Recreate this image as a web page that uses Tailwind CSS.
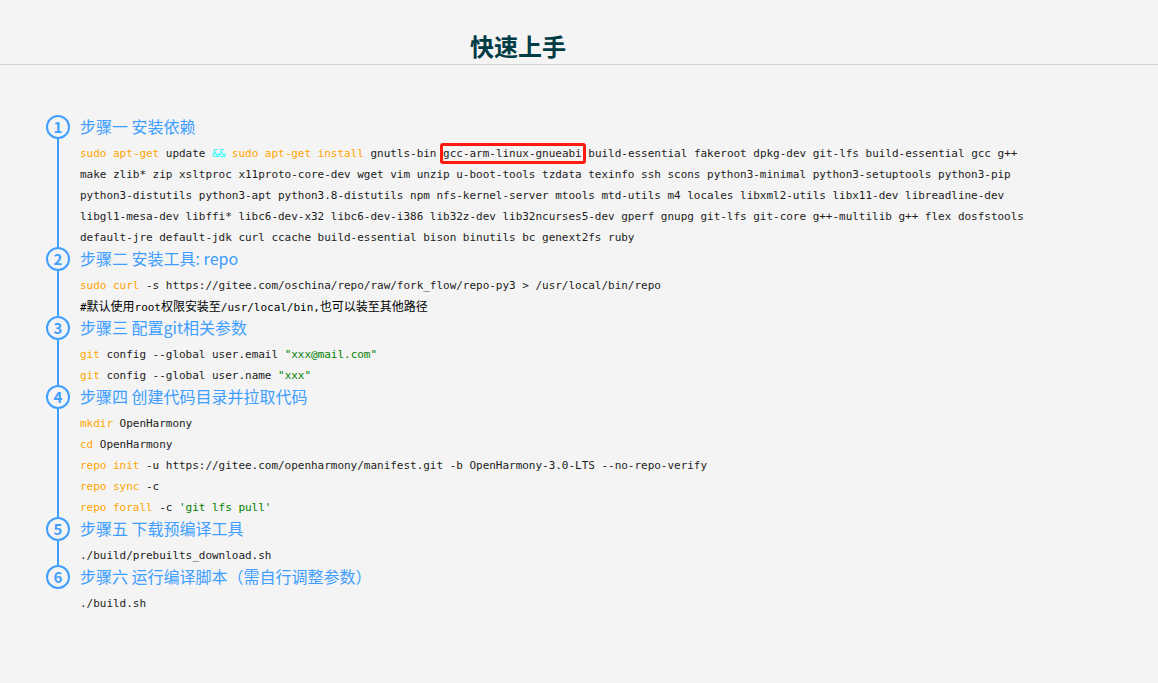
<!DOCTYPE html>
<html lang="zh">
  <head>
    <meta charset="UTF-8" />
    <title>快速上手</title>
    <script src="https://cdn.jsdelivr.net/npm/@tailwindcss/browser@4"></script>
  </head>
  <body class="bg-[#f4f4f4] h-[683px] overflow-hidden font-['Noto_Sans_CJK_SC',sans-serif]">
    <header class="h-[65px] border-b border-[#d2d2d2] pr-[122px] flex items-end justify-center pb-[2px]">
      <h1 class="text-[24px] leading-[32px] font-bold text-[#003c46] mt-[1px]">快速上手</h1>
    </header>

    <main class="pl-[46px] pt-[50px]">
      <!-- step 1 -->
      <section class="flex gap-[10px]">
        <div class="w-[24px] flex flex-col">
          <div class="size-[24px] shrink-0 rounded-full border-[2px] border-[#409eff] flex items-center justify-center text-[15px] font-bold text-[#409eff]">1</div>
          <div class="w-[2px] ml-[11px] flex-1 bg-[#409eff]"></div>
        </div>
        <div class="flex-1">
          <h2 class="h-[25px] mb-[3px] text-[16px] leading-[22px] text-[#409eff]">步骤一 安装依赖</h2>
          <div class="-mb-[1px] font-['DejaVu_Sans_Mono',monospace] text-[11px] tracking-[-0.022px] leading-[21px] text-[#1c1c1c]">
            <p><span class="text-[#ffa500]">sudo apt-get</span> update <span class="text-[#00ffff]">&amp;&amp;</span> <span class="text-[#ffa500]">sudo apt-get install</span> gnutls-bin <span class="relative">gcc-arm-linux-gnueabi<span class="absolute -left-[3px] -right-[4px] -top-[4px] -bottom-[4px] border-[3px] border-[#ff1a0e] rounded-[3px]"></span></span> build-essential fakeroot dpkg-dev git-lfs build-essential gcc g++</p>
            <p>make zlib* zip xsltproc x11proto-core-dev wget vim unzip u-boot-tools tzdata texinfo ssh scons python3-minimal python3-setuptools python3-pip</p>
            <p>python3-distutils python3-apt python3.8-distutils npm nfs-kernel-server mtools mtd-utils m4 locales libxml2-utils libx11-dev libreadline-dev</p>
            <p>libgl1-mesa-dev libffi* libc6-dev-x32 libc6-dev-i386 lib32z-dev lib32ncurses5-dev gperf gnupg git-lfs git-core g++-multilib g++ flex dosfstools</p>
            <p>default-jre default-jdk curl ccache build-essential bison binutils bc genext2fs ruby</p>
          </div>
        </div>
      </section>

      <!-- step 2 -->
      <section class="flex gap-[10px]">
        <div class="w-[24px] flex flex-col">
          <div class="size-[24px] shrink-0 rounded-full border-[2px] border-[#409eff] flex items-center justify-center text-[15px] font-bold text-[#409eff]">2</div>
          <div class="w-[2px] ml-[11px] flex-1 bg-[#409eff]"></div>
        </div>
        <div class="flex-1">
          <h2 class="h-[25px] mb-[3px] text-[16px] leading-[22px] text-[#409eff]">步骤二 安装工具: repo</h2>
          <div class="-mb-[1px] font-['DejaVu_Sans_Mono',monospace] text-[11px] tracking-[-0.022px] leading-[21px] text-[#1c1c1c]">
            <p><span class="text-[#ffa500]">sudo curl</span> -s https://gitee.com/oschina/repo/raw/fork_flow/repo-py3 &gt; /usr/local/bin/repo</p>
            <p class="h-[21px] pt-[1px] text-black">#<span class="text-[12px] leading-none font-['Noto_Sans_CJK_SC']">默认使用</span>root<span class="text-[12px] leading-none font-['Noto_Sans_CJK_SC']">权限安装至</span>/usr/local/bin,<span class="text-[12px] leading-none font-['Noto_Sans_CJK_SC']">也可以装至其他路径</span></p>
          </div>
        </div>
      </section>

      <!-- step 3 -->
      <section class="flex gap-[10px]">
        <div class="w-[24px] flex flex-col">
          <div class="size-[24px] shrink-0 rounded-full border-[2px] border-[#409eff] flex items-center justify-center text-[15px] font-bold text-[#409eff]">3</div>
          <div class="w-[2px] ml-[11px] flex-1 bg-[#409eff]"></div>
        </div>
        <div class="flex-1">
          <h2 class="h-[25px] mb-[3px] text-[16px] leading-[22px] text-[#409eff]">步骤三 配置git相关参数</h2>
          <div class="-mb-[1px] font-['DejaVu_Sans_Mono',monospace] text-[11px] tracking-[-0.022px] leading-[21px] text-[#1c1c1c]">
            <p><span class="text-[#ffa500]">git</span> config --global user.email <span class="text-[#008000]">"xxx@mail.com"</span></p>
            <p><span class="text-[#ffa500]">git</span> config --global user.name <span class="text-[#008000]">"xxx"</span></p>
          </div>
        </div>
      </section>

      <!-- step 4 -->
      <section class="flex gap-[10px]">
        <div class="w-[24px] flex flex-col">
          <div class="size-[24px] shrink-0 rounded-full border-[2px] border-[#409eff] flex items-center justify-center text-[15px] font-bold text-[#409eff]">4</div>
          <div class="w-[2px] ml-[11px] flex-1 bg-[#409eff]"></div>
        </div>
        <div class="flex-1">
          <h2 class="h-[25px] mb-[3px] text-[16px] leading-[22px] text-[#409eff]">步骤四 创建代码目录并拉取代码</h2>
          <div class="-mb-[1px] font-['DejaVu_Sans_Mono',monospace] text-[11px] tracking-[-0.022px] leading-[21px] text-[#1c1c1c]">
            <p><span class="text-[#ffa500]">mkdir</span> OpenHarmony</p>
            <p><span class="text-[#ffa500]">cd</span> OpenHarmony</p>
            <p><span class="text-[#ffa500]">repo init</span> -u https://gitee.com/openharmony/manifest.git -b OpenHarmony-3.0-LTS --no-repo-verify</p>
            <p><span class="text-[#ffa500]">repo sync</span> -c</p>
            <p><span class="text-[#ffa500]">repo forall</span> -c <span class="text-[#008000]">'git lfs pull'</span></p>
          </div>
        </div>
      </section>

      <!-- step 5 -->
      <section class="flex gap-[10px]">
        <div class="w-[24px] flex flex-col">
          <div class="size-[24px] shrink-0 rounded-full border-[2px] border-[#409eff] flex items-center justify-center text-[15px] font-bold text-[#409eff]">5</div>
          <div class="w-[2px] ml-[11px] flex-1 bg-[#409eff]"></div>
        </div>
        <div class="flex-1">
          <h2 class="h-[25px] mb-[3px] text-[16px] leading-[22px] text-[#409eff]">步骤五 下载预编译工具</h2>
          <div class="-mb-[1px] font-['DejaVu_Sans_Mono',monospace] text-[11px] tracking-[-0.022px] leading-[21px] text-[#1c1c1c]">
            <p>./build/prebuilts_download.sh</p>
          </div>
        </div>
      </section>

      <!-- step 6 -->
      <section class="flex gap-[10px]">
        <div class="w-[24px] flex flex-col">
          <div class="size-[24px] shrink-0 rounded-full border-[2px] border-[#409eff] flex items-center justify-center text-[15px] font-bold text-[#409eff]">6</div>
        </div>
        <div class="flex-1">
          <h2 class="h-[25px] mb-[3px] text-[16px] leading-[22px] text-[#409eff]">步骤六 运行编译脚本（需自行调整参数）</h2>
          <div class="-mb-[1px] font-['DejaVu_Sans_Mono',monospace] text-[11px] tracking-[-0.022px] leading-[21px] text-[#1c1c1c]">
            <p>./build.sh</p>
          </div>
        </div>
      </section>
    </main>
  </body>
</html>
